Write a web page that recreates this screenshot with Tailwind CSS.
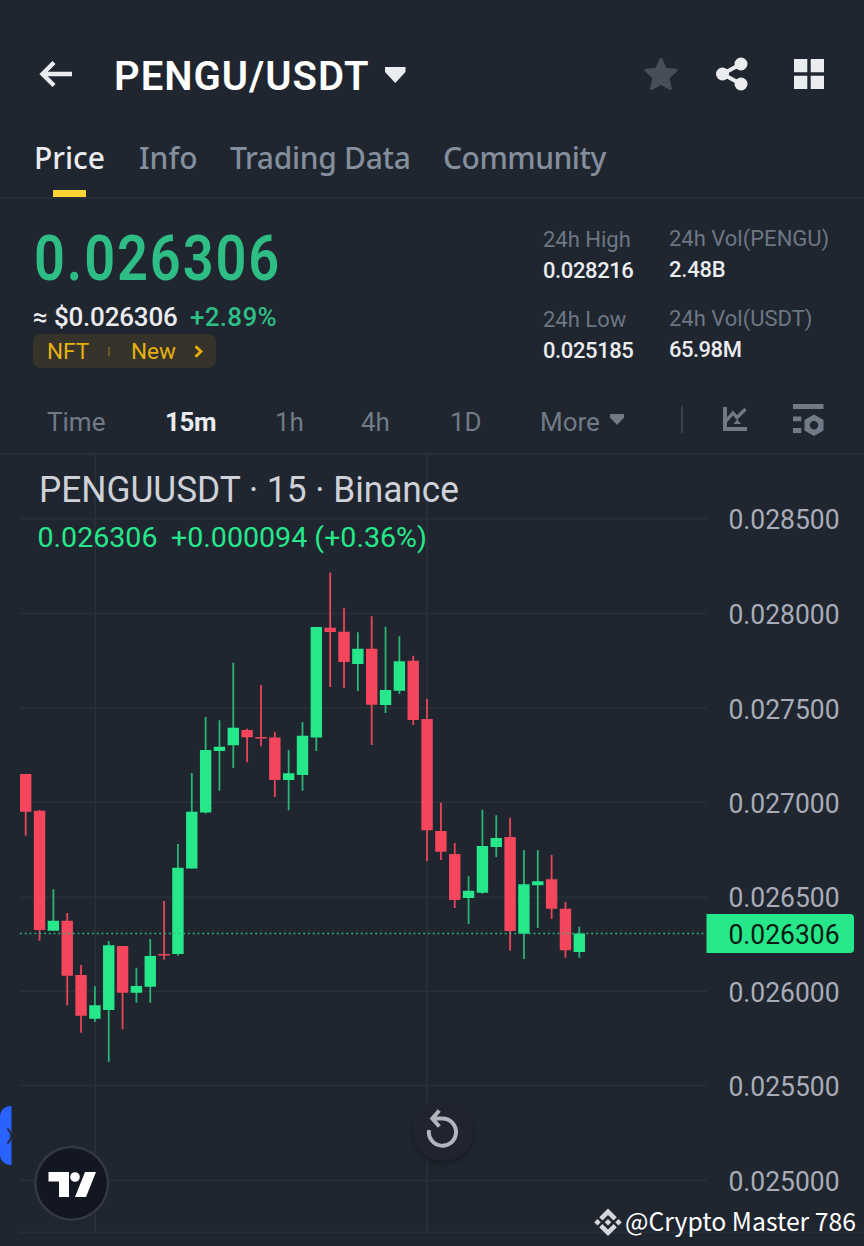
<!DOCTYPE html>
<html lang="en">
<head>
<meta charset="utf-8">
<title>PENGU/USDT</title>
<script src="https://cdn.jsdelivr.net/npm/@tailwindcss/browser@4"></script>
</head>
<body class="bg-[#20262f]">
<div class="relative flex h-[1246px] w-[864px] flex-col overflow-hidden bg-[#20262f] font-['Roboto',sans-serif] whitespace-nowrap">
  <header class="flex h-[122px] items-center pt-[26px] pl-[38px]">
    <svg class="h-[30px] w-[36px]" viewBox="0 0 36 30" fill="none" stroke="#eaecef" stroke-width="4.4"><path d="M4 15H34M16 3.5L4.5 15L16 26.500"/></svg>
    <h1 class="ml-[40px] w-[271px] pt-[5px] text-[40px] leading-[48px] font-semibold tracking-[1px] text-white">PENGU/USDT</h1>
    <svg class="mt-px h-[16px] w-[21px]" viewBox="0 0 21 16" fill="#eaecef"><path d="M0 0H20.500V5L10.300 16L0 5Z"/></svg>
    <svg class="ml-[238px] h-[34px] w-[34px]" viewBox="0 0 34 34" fill="#474d59" stroke="#474d59" stroke-width="3" stroke-linejoin="round"><path d="M17 2.300L21.200 12.200L32 13.200L24 20.700L26.300 31.500L17 26.300L7.700 31.500L10 20.700L2 13.200L12.800 12.200Z"/></svg>
    <svg class="ml-[38px] h-[34px] w-[32px]" viewBox="0 0 32 34" fill="#eaecef"><path d="M6.500 17L25 7M6.500 17L25 27" stroke="#eaecef" stroke-width="4"/><circle cx="6.500" cy="17" r="6.500"/><circle cx="25" cy="7" r="6.500"/><circle cx="25" cy="27" r="6.500"/></svg>
    <svg class="ml-[46px] h-[30px] w-[30px]" viewBox="0 0 30 30" fill="#eaecef"><path d="M0 0H13.300V13.300H0ZM16.700 0H30V13.300H16.700ZM0 16.700H13.300V30H0ZM16.700 16.700H30V30H16.700Z"/></svg>
  </header>
  <nav class="flex h-[77px] border-b-2 border-[#282e37] pl-[34px] pt-[15px] font-['Noto_Sans',sans-serif] text-[30px] leading-[42px] font-medium text-[#848e9c]">
    <div class="flex w-[105px] flex-col text-[#eaecef]"><span>Price</span><span class="mt-auto ml-[19px] h-[7px] w-[33px] bg-[#fcd535]"></span></div>
    <div class="w-[91px]">Info</div>
    <div class="w-[213px] tracking-[-0.3px]">Trading Data</div>
    <div class="tracking-[-0.5px]">Community</div>
  </nav>
  <section class="flex h-[180px]">
    <div class="w-[543px] pl-[33px] pt-[24px]">
      <div class="origin-left translate-x-[1px] scale-x-[0.86] text-[63px] leading-[72px] font-semibold tracking-[2.2px] text-[#2ebd85]">0.026306</div>
      <div class="mt-[5px] flex text-[26px] leading-[34px] font-medium"><span class="w-[157px] tracking-[-0.2px] text-[#eaecef]">≈ $0.026306</span><span class="tracking-[0.3px] text-[#2ebd85]">+2.89%</span></div>
      <div class="flex h-[34px] w-[183px] items-center rounded-[8px] bg-[#36332b] pl-[14px] pt-px text-[22.500px] text-[#e6b10e]"><span class="w-[61px]">NFT</span><span class="mr-[21px] h-[9px] w-[2px] bg-[#6e5a1e]"></span><span class="w-[63px]">New</span><svg class="h-[13px] w-[9px]" viewBox="0 0 9 13" fill="none" stroke="#e6b10e" stroke-width="2.800"><path d="M1.500 1.200L7 6.500L1.500 11.800"/></svg></div>
    </div>
    <dl class="grid grid-cols-[126px_170px] grid-rows-[80px_80px] pt-[26px] text-[22px] leading-[30px] text-[#6d7683]">
      <div><dt>24h High</dt><dd class="pt-[1px] font-medium tracking-[-0.4px] text-[#eaecef]">0.028216</dd></div>
      <div class="-mt-px"><dt>24h Vol(PENGU)</dt><dd class="pt-[1px] font-medium tracking-[-0.2px] text-[#eaecef]">2.48B</dd></div>
      <div><dt>24h Low</dt><dd class="pt-[1px] font-medium tracking-[-0.4px] text-[#eaecef]">0.025185</dd></div>
      <div class="-mt-px"><dt>24h Vol(USDT)</dt><dd class="pt-[1px] font-medium tracking-[-0.5px] text-[#eaecef]">65.98M</dd></div>
    </dl>
  </section>
  <div class="flex h-[76px] items-center border-b-2 border-[#282e37] pl-[47px] pt-[12px] text-[26px] text-[#717a87]">
    <span class="w-[118px]">Time</span><span class="w-[110px] font-bold tracking-[-0.4px] text-[#eaecef]">15m</span><span class="w-[86px]">1h</span><span class="w-[89px]">4h</span><span class="w-[90px]">1D</span><span class="w-[70px]">More</span>
    <svg class="mb-[6px] h-[11px] w-[14px]" viewBox="0 0 14 11" fill="#717a87"><path d="M0 0H14V3.500L7 11L0 3.500Z"/></svg>
    <span class="mb-[5px] ml-[57px] h-[27px] w-[2px] bg-[#39404a]"></span>
    <svg class="ml-[40px] mb-[6px] h-[24px] w-[24px]" viewBox="0 0 24 24" fill="none" stroke="#717a87" stroke-width="4"><path d="M2 0V22H24"/><path d="M3 14L10 6L14 10.500L22.500 2" stroke-width="3.300"/><path d="M10.500 17L14.200 12.500L18 17Z" fill="#717a87" stroke="none"/></svg>
    <svg class="ml-[46px] mb-[4px] h-[32px] w-[31px]" viewBox="0 0 31 32" fill="#717a87"><path d="M0 0H30.500V5H0ZM0 12.500H8.300V17.300H0ZM0 24H8.300V29H0Z"/><path fill-rule="evenodd" d="M21 10.500L30.500 16V26.500L21 32L11.500 26.500V16ZM21 17A4.200 4.200 0 1 0 21 25.400A4.200 4.200 0 1 0 21 17Z"/></svg>
  </div>
  <svg class="h-[791px] w-[864px]" viewBox="0 455 864 791" font-family="Roboto, sans-serif">
    <path d="M20 519H707M20 613.500H707M20 708H707M20 802.300H707M20 897H707M20 991.300H707M20 1085.500H707M20 1180.500H707M20 1232.500H864M95.300 455V1232M427.200 455V1232" stroke="#2a3039" stroke-width="1.600"/>
    <path id="wr" stroke="#ea4459" stroke-width="1.800"/>
    <path id="wg" stroke="#28b575" stroke-width="1.800"/>
    <path id="br" fill="#f6465d"/>
    <path id="bg" fill="#26e88b"/>
    <path d="M20 933.500H706" stroke="#2fb67e" stroke-width="1.700" stroke-dasharray="1.800 3"/>
    <text x="39" y="501.500" font-size="36" textLength="420" lengthAdjust="spacingAndGlyphs" fill="#cfd1d8">PENGUUSDT · 15 · Binance</text>
    <g font-size="28" fill="#26e88b"><text x="37.500" y="547" textLength="120" lengthAdjust="spacingAndGlyphs">0.026306</text><text x="171" y="547" textLength="256" lengthAdjust="spacingAndGlyphs">+0.000094 (+0.36%)</text></g>
    <path d="M706.500 914H850A4 4 0 0 1 854 918V949A4 4 0 0 1 850 953H706.500Z" fill="#26e88b"/>
    <g font-size="27.500" fill="#a9acb8">
      <text x="728.500" y="529" textLength="111" lengthAdjust="spacingAndGlyphs">0.028500</text>
      <text x="728.500" y="624" textLength="111" lengthAdjust="spacingAndGlyphs">0.028000</text>
      <text x="728.500" y="718.500" textLength="111" lengthAdjust="spacingAndGlyphs">0.027500</text>
      <text x="728.500" y="813" textLength="111" lengthAdjust="spacingAndGlyphs">0.027000</text>
      <text x="728.500" y="907" textLength="111" lengthAdjust="spacingAndGlyphs">0.026500</text>
      <text x="728.500" y="943.500" textLength="111" lengthAdjust="spacingAndGlyphs" fill="#061a12">0.026306</text>
      <text x="728.500" y="1001.500" textLength="111" lengthAdjust="spacingAndGlyphs">0.026000</text>
      <text x="728.500" y="1096" textLength="111" lengthAdjust="spacingAndGlyphs">0.025500</text>
      <text x="728.500" y="1190.500" textLength="111" lengthAdjust="spacingAndGlyphs">0.025000</text>
    </g>
    <path d="M11.500 1106H10A10 10 0 0 0 0 1116V1155A10 10 0 0 0 10 1165H11.500Z" fill="#2962ff"/>
    <path d="M7.500 1128.500L11 1133.500V1138.500L7.500 1143.500" fill="none" stroke="#242b3d" stroke-width="2"/>
    <circle cx="71.700" cy="1183.300" r="36.300" fill="#131722" stroke="#343841" stroke-width="2.400"/>
    <path d="M48.500 1172H69V1197H59V1181.500H48.500ZM85 1172H96L86 1197H75Z" fill="#fff"/><circle cx="75" cy="1177" r="4.800" fill="#fff"/>
    <defs><filter id="sh" x="-30%" y="-30%" width="160%" height="160%" color-interpolation-filters="sRGB"><feDropShadow dx="0" dy="3" stdDeviation="2.500" flood-color="#12161e" flood-opacity=".7"/></filter></defs>
    <circle cx="443" cy="1130" r="31" fill="#20242e" filter="url(#sh)"/>
    <g fill="none" stroke="#b2b5be" stroke-width="4"><path d="M429 1130A13.600 13.600 0 1 0 442.600 1118.500H433"/><path d="M439.300 1110.500L432.300 1118.500L439.300 1126.500"/></g>
    <g fill="#d5d7dc"><path d="M608 1208.500L616.800 1217.200L613.500 1220.500L608 1215L602.500 1220.500L599.200 1217.200ZM608 1236L616.800 1227.300L613.500 1224L608 1229.500L602.500 1224L599.200 1227.300ZM608 1219L611.300 1222.300L608 1225.600L604.700 1222.300ZM597.500 1219L600.800 1222.300L597.500 1225.600L594.200 1222.300ZM618.500 1219L621.800 1222.300L618.500 1225.600L615.200 1222.300Z"/></g>
    <text x="625" y="1231" font-family="Noto Sans CJK SC, sans-serif" font-size="25" textLength="231" lengthAdjust="spacingAndGlyphs" fill="#fff">@Crypto Master 786</text>
  </svg>
</div>
<script>
// Each candle: colour, body top, body bottom, wick top, wick bottom
const candles = [
['r',774,811.7,774,835.7],['r',810.7,930,810,940.7],['g',920.7,930.7,889.3,930.7],['r',920.7,975.7,913,1005.3],['r',975,1015.7,965,1032.7],
['g',1005.3,1018.7,986.3,1022],['g',945.3,1010,941,1061.7],['r',946,992.7,946,1029.3],['g',986,992.7,967.7,1002.7],['g',956,986.7,939,1002.7],
['r',954,955.5,901,959.7],['g',867.7,954,844,955.7],['g',811.7,868.5,773,868.5],['g',750,812.5,717,813.5],['g',746.8,751,720.3,790.7],
['g',727.7,745.3,662.7,768],['r',730,737.3,728.7,762.3],['r',737,738.4,685,746.3],['r',737.5,780,731.7,797],['g',773.3,780,750,810.3],
['g',735.7,775,722,790.7],['g',627,737.5,627,751],['r',627.7,632,572.5,687],['r',631.7,662,607.7,688],['g',648.7,664,632.3,691],
['r',648.7,704.7,616.3,745],['g',690,705,626.7,713],['g',661.3,690.7,636.3,694],['r',660.7,720,655.7,725],['r',719,830.3,699,861],
['r',831,851.7,802.7,860],['r',854,900,843,908],['g',890.7,898,876.3,924],['g',846,892.7,809.7,893.7],['g',838,847,815.3,857],
['r',837,931,817.7,950.7],['g',884.3,933.7,850,959],['g',881.2,885.2,850,928],['r',879.3,908.7,855,919],['r',908.7,950.3,902,957.7],['g',933.5,952,926.7,957.7]];
const d = {wr:'',wg:'',br:'',bg:''};
candles.forEach(([c,t,b,wt,wb],i)=>{
  const x = 25.7 + i*13.84;
  d['w'+c] += `M${x} ${wt}V${wb}`;
  d['b'+c] += `M${x-5.7} ${t}h11.4V${b}h-11.4Z`;
});
for (const k in d) document.getElementById(k).setAttribute('d', d[k]);
</script>
</body>
</html>
